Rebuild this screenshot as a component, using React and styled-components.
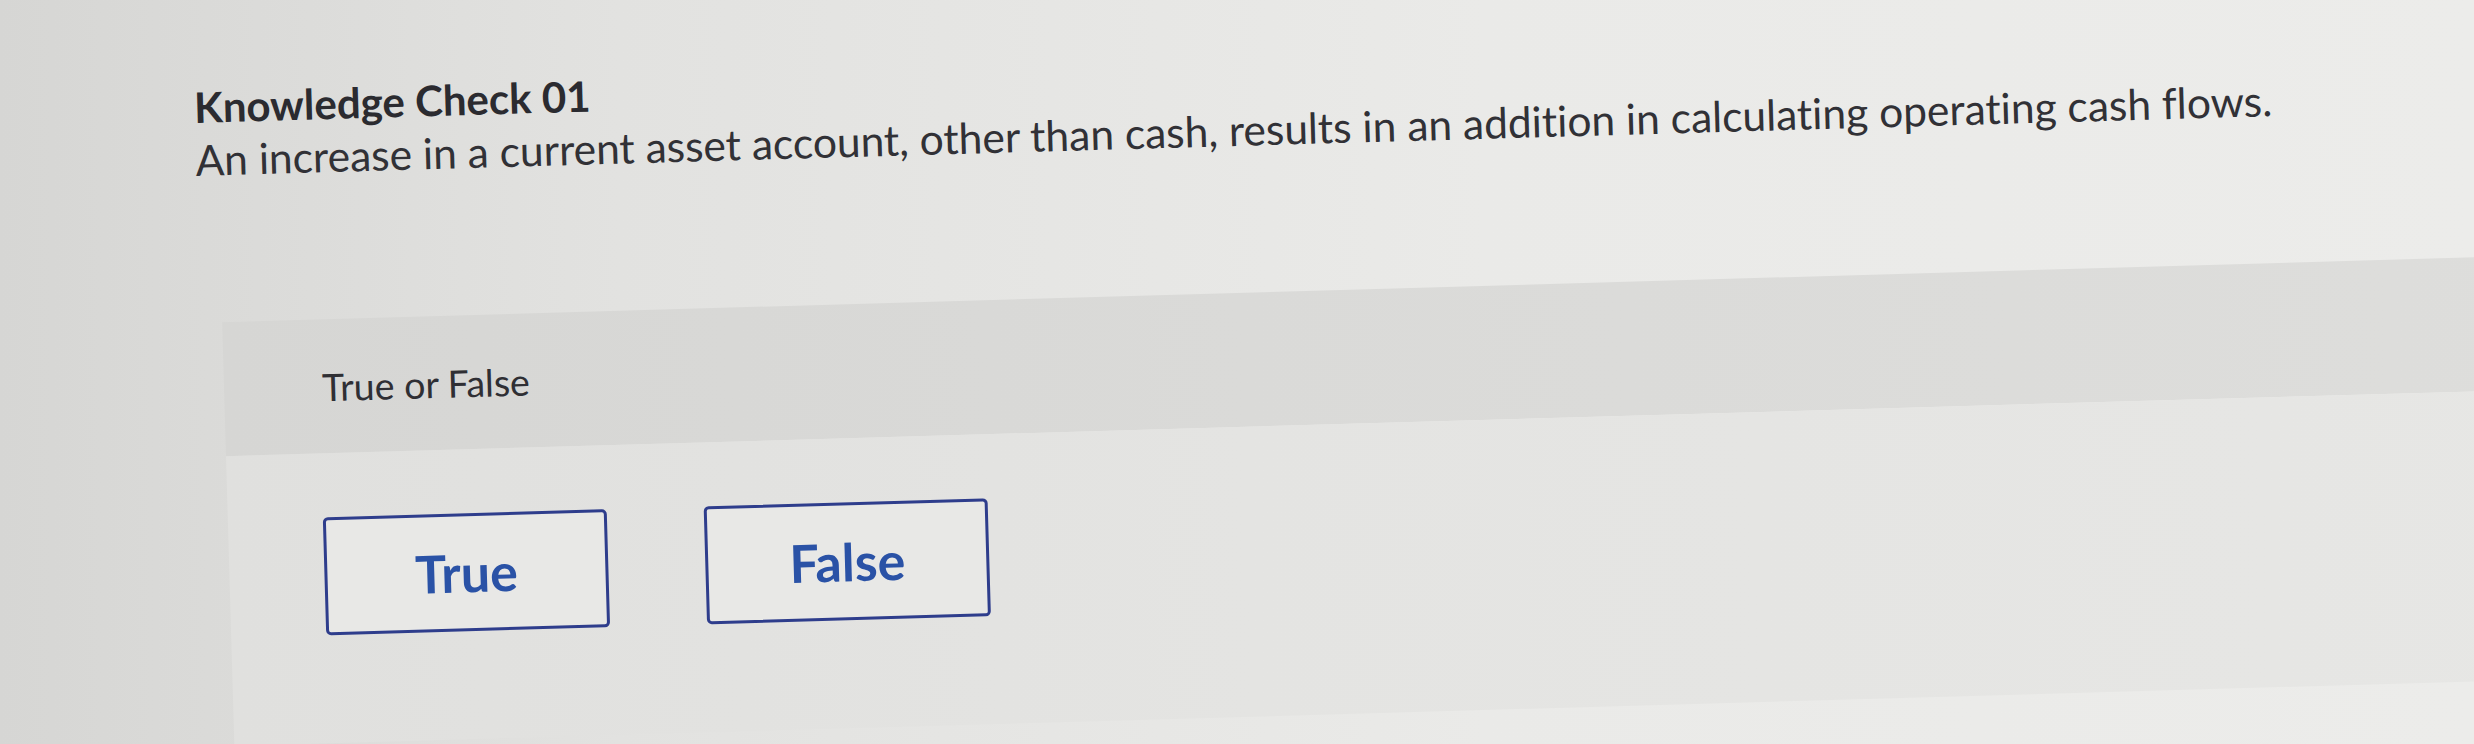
import styled, { createGlobalStyle } from "styled-components";

const GlobalStyle = createGlobalStyle`
  html, body {
    margin: 0;
    padding: 0;
    width: 2474px;
    height: 744px;
    overflow: hidden;
    background: linear-gradient(90deg, #d6d6d4 0%, #e2e2e0 25%, #eaeae8 60%, #ececea 100%);
    font-family: Lato, "Liberation Sans", Arial, sans-serif;
    font-variant-ligatures: none;
  }
`

// whole sheet sits a little askew on the screen
const Page = styled.div`
  width: 2474px;
  height: 744px;
  box-sizing: border-box;
  padding-top: 52px;
  transform: rotate(-1.65deg);
  transform-origin: 1237px 372px;
`
const Header = styled.div`
  padding-left: 202px;
`
const Title = styled.h2`
  margin: 0;
  font-size: 42px;
  line-height: 51px;
  font-weight: 700;
  color: #2b2b30;
`
const Prompt = styled.p`
  margin: 0;
  font-size: 42.5px;
  line-height: 54px;
  font-weight: 400;
  color: #313136;
  white-space: nowrap;
`
const Panel = styled.div`
  margin: 136px -300px 0 224px;
  display: flex;
  flex-direction: column;
`
const PanelHead = styled.div`
  height: 134px;
  display: flex;
  align-items: center;
  padding-left: 98px;
  background: linear-gradient(90deg, #d6d6d4 0%, #dadad8 40%, #dededc 100%);
  font-size: 37.5px;
  color: #2f2f34;
`
const PanelBody = styled.div`
  height: 290px;
  box-sizing: border-box;
  padding: 64px 0 0 95px;
  display: flex;
  align-items: flex-start;
  gap: 97px;
  background: linear-gradient(90deg, #e0e0de 0%, #e4e4e2 40%, #e7e7e5 100%);
`
const Choice = styled.button`
  width: 284px;
  height: 118px;
  box-sizing: border-box;
  border: 3px solid #2e3d8c;
  border-radius: 5px;
  background: #e8e8e6;
  color: #2a52a6;
  font-family: Lato, "Liberation Sans", Arial, sans-serif;
  font-size: 52px;
  font-weight: 700;
  cursor: pointer;
`

export default function App() {
  return <>
    <GlobalStyle />
    <Page>
      <Header>
        <Title>Knowledge Check 01</Title>
        <Prompt>An increase in a current asset account, other than cash, results in an addition in calculating operating cash flows.</Prompt>
      </Header>
      <Panel>
        <PanelHead>True or False</PanelHead>
        <PanelBody>
          <Choice>True</Choice>
          <Choice>False</Choice>
        </PanelBody>
      </Panel>
    </Page>
  </>
}
